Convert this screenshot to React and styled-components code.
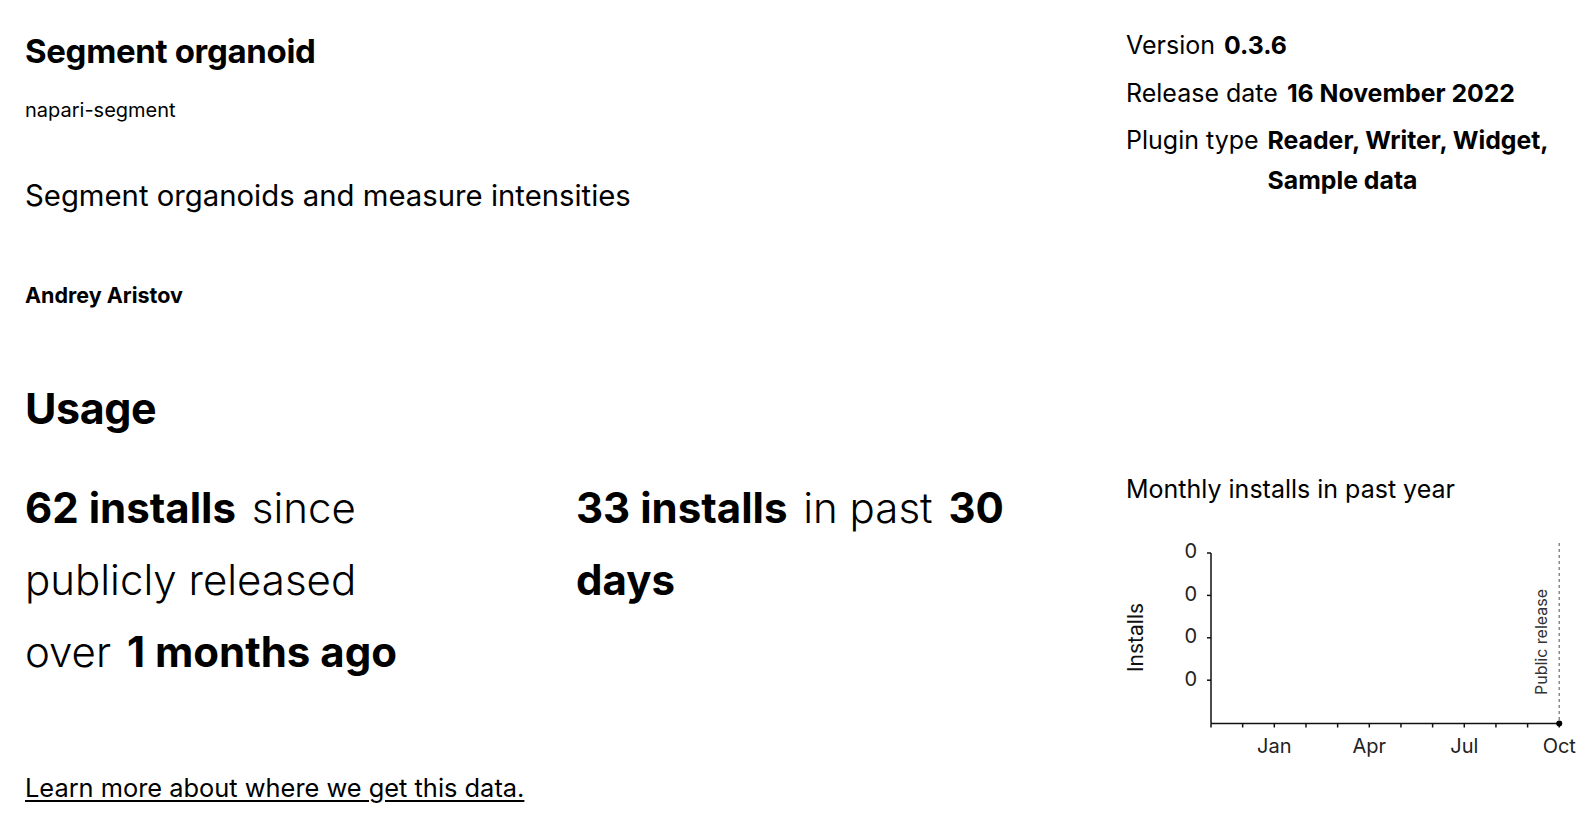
import React from "react";
import styled, { createGlobalStyle } from "styled-components";

const GlobalStyle = createGlobalStyle`
  html, body {
    margin: 0;
    padding: 0;
    background: #ffffff;
  }
  body {
    font-family: Inter, Roboto, "Liberation Sans", sans-serif;
    color: #000000;
  }
  * {
    box-sizing: border-box;
  }
`;

const Page = styled.main`
  width: 1590px;
  padding: 25px 25px 0;
`;

const Header = styled.section`
  display: grid;
  grid-template-columns: 1050px 1fr;
  column-gap: 51px;
`;

const Title = styled.h1`
  margin: 6px 0 0;
  font-size: 33px;
  line-height: 40px;
  font-weight: 700;
  letter-spacing: -0.01em;
`;

const PackageName = styled.p`
  margin: 27px 0 0;
  font-size: 20px;
  line-height: 24px;
`;

const Summary = styled.p`
  margin: 57px 0 0;
  font-size: 29.3px;
  line-height: 34px;
`;

const Author = styled.p`
  margin: 69px 0 0;
  font-size: 21.5px;
  line-height: 26px;
  font-weight: 700;
`;

const MetaList = styled.dl`
  margin: 0;
  display: flex;
  flex-direction: column;
  gap: 7.5px;
`;

const MetaRow = styled.div`
  display: flex;
  gap: 9px;
  font-size: 25px;
  line-height: 40px;
`;

const MetaLabel = styled.dt`
  margin: 0;
  flex-shrink: 0;
`;

const MetaValue = styled.dd`
  margin: 0;
  font-weight: 700;
  font-size: 24.8px;
  max-width: 300px;
`;

const UsageTitle = styled.h2`
  margin: 74px 0 0;
  font-size: 43px;
  line-height: 52px;
  font-weight: 700;
  letter-spacing: -0.01em;
`;

const UsageBody = styled.div`
  margin-top: 38px;
  display: grid;
  grid-template-columns: 1050px 1fr;
  column-gap: 51px;
`;

const StatsGrid = styled.div`
  display: grid;
  grid-template-columns: 500px 500px;
  column-gap: 51px;
`;

const Stat = styled.p`
  margin: 0;
  max-width: ${(p) => p.$wrapAt}px;
  font-size: 42px;
  line-height: 72px;
`;

const Strong = styled.strong`
  font-weight: 700;
  margin: 0 4px;
  &:first-child {
    margin-left: 0;
  }
`;

const Plain = styled.span`
  font-weight: 300;
`;

const LearnMore = styled.a`
  display: inline-block;
  margin-top: 85px;
  font-size: 25.4px;
  line-height: 30px;
  color: #000000;
  text-decoration: underline;
  text-underline-offset: 3px;
`;

const ChartPanel = styled.div`
  display: flex;
  flex-direction: column;
`;

const ChartTitle = styled.h3`
  margin: 1.5px 0 0;
  font-size: 25px;
  line-height: 30px;
  font-weight: 400;
`;

const ChartSvg = styled.svg`
  margin-top: 26px;
  overflow: visible;
  font-family: Inter, Roboto, "Liberation Sans", sans-serif;
`;

const AXIS_X = 85;
const AXIS_Y = 193.5;
const Y_TICKS = [23, 65.4, 107.8, 150.2];
const X_STEP = 31.66;
const MONTHS = { 2: "Jan", 5: "Apr", 8: "Jul", 11: "Oct" };

function InstallsChart() {
  const xTicks = Array.from({ length: 12 }, (_, i) => AXIS_X + i * X_STEP);
  const releaseX = xTicks[11];

  return (
    <ChartSvg width="440" height="240" viewBox="0 0 440 240">
      <text
        transform="translate(17, 107.5) rotate(-90)"
        textAnchor="middle"
        fontSize="21"
        fill="#111"
      >
        Installs
      </text>

      {Y_TICKS.map((y) => (
        <g key={y}>
          <line x1={AXIS_X - 4} x2={AXIS_X} y1={y} y2={y} stroke="#111" strokeWidth="1.5" />
          <text x="71" y={y} textAnchor="end" dominantBaseline="middle" fontSize="20" fill="#222">
            0
          </text>
        </g>
      ))}

      <line x1={AXIS_X} x2={AXIS_X} y1={Y_TICKS[0]} y2={AXIS_Y} stroke="#111" strokeWidth="1.5" />
      <line x1={AXIS_X} x2={releaseX} y1={AXIS_Y} y2={AXIS_Y} stroke="#111" strokeWidth="1.5" />

      {xTicks.map((x, i) => (
        <g key={i}>
          <line x1={x} x2={x} y1={AXIS_Y} y2={AXIS_Y + 4} stroke="#111" strokeWidth="1.5" />
          {MONTHS[i] && (
            <text x={x} y="223" textAnchor="middle" fontSize="20" fill="#222">
              {MONTHS[i]}
            </text>
          )}
        </g>
      ))}

      <line
        x1={releaseX}
        x2={releaseX}
        y1="13"
        y2={AXIS_Y}
        stroke="#8a8a8a"
        strokeWidth="1.5"
        strokeDasharray="3 3"
      />
      <circle cx={releaseX} cy={AXIS_Y} r="3" fill="#000" />
      <text
        transform={`translate(${releaseX - 12}, 165) rotate(-90)`}
        fontSize="16"
        fill="#333"
      >
        Public release
      </text>
    </ChartSvg>
  );
}

export default function App() {
  return (
    <>
      <GlobalStyle />
      <Page>
        <Header>
          <div>
            <Title>Segment organoid</Title>
            <PackageName>napari-segment</PackageName>
            <Summary>Segment organoids and measure intensities</Summary>
            <Author>Andrey Aristov</Author>
          </div>
          <MetaList>
            <MetaRow>
              <MetaLabel>Version</MetaLabel>
              <MetaValue>0.3.6</MetaValue>
            </MetaRow>
            <MetaRow>
              <MetaLabel>Release date</MetaLabel>
              <MetaValue>16 November 2022</MetaValue>
            </MetaRow>
            <MetaRow>
              <MetaLabel>Plugin type</MetaLabel>
              <MetaValue>Reader, Writer, Widget, Sample data</MetaValue>
            </MetaRow>
          </MetaList>
        </Header>

        <section>
          <UsageTitle>Usage</UsageTitle>
          <UsageBody>
            <div>
              <StatsGrid>
                <Stat $wrapAt={410}>
                  <Strong>62 installs</Strong>
                  <Plain> since publicly released over </Plain>
                  <Strong>1 months ago</Strong>
                </Stat>
                <Stat $wrapAt={480}>
                  <Strong>33 installs</Strong>
                  <Plain> in past </Plain>
                  <Strong>30 days</Strong>
                </Stat>
              </StatsGrid>
              <LearnMore href="#">Learn more about where we get this data.</LearnMore>
            </div>
            <ChartPanel>
              <ChartTitle>Monthly installs in past year</ChartTitle>
              <InstallsChart />
            </ChartPanel>
          </UsageBody>
        </section>
      </Page>
    </>
  );
}
